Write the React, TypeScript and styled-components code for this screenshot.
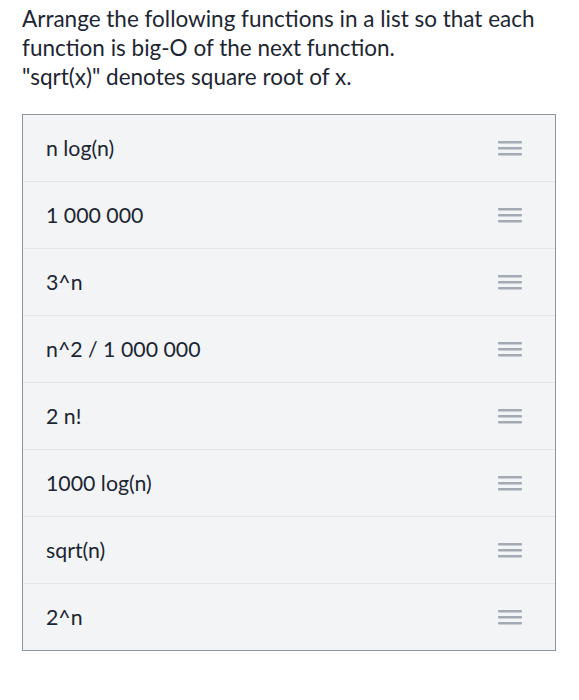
import React from 'react';
import styled, { createGlobalStyle } from 'styled-components';

const Global = createGlobalStyle`
  html, body {
    margin: 0;
    padding: 0;
    background: #ffffff;
  }
  body {
    font-family: Lato, "Noto Sans", "Liberation Sans", sans-serif;
    color: #1f2a36;
  }
`;

const Page = styled.div`
  padding: 4px 23px 0 22px;
  width: 534px;
`;

const Prompt = styled.div`
  font-size: 22.5px;
  line-height: 29px;
  color: #1c2632;
  margin-bottom: 23px;
`;

const List = styled.div`
  display: flex;
  flex-direction: column;
  border: 1px solid #8c949e;
  background: #f3f4f6;
`;

const Row = styled.div<{ last?: boolean }>`
  display: flex;
  align-items: center;
  justify-content: space-between;
  height: 66px;
  padding: 0 33px 0 23px;
  border-bottom: ${({ last }) => (last ? 'none' : '1px solid #e2e5e9')};
`;

const Label = styled.span`
  font-size: 21.3px;
  color: #1c2632;
`;

const Handle = styled.svg`
  width: 24px;
  height: 18px;
  flex-shrink: 0;
`;

const items = [
  'n log(n)',
  '1 000 000',
  '3^n',
  'n^2 / 1 000 000',
  '2 n!',
  '1000 log(n)',
  'sqrt(n)',
  '2^n',
];

const GripIcon = () => (
  <Handle viewBox="0 0 24 18">
    <rect x="0" y="2" width="24" height="2.4" rx="1" fill="#a3aab3" />
    <rect x="0" y="8" width="24" height="2.4" rx="1" fill="#a3aab3" />
    <rect x="0" y="14" width="24" height="2.4" rx="1" fill="#a3aab3" />
  </Handle>
);

export default function App() {
  return (
    <Page>
      <Global />
      <Prompt>
        Arrange the following functions in a list so that each function is big-O of the next function.
        <br />
        "sqrt(x)" denotes square root of x.
      </Prompt>
      <List>
        {items.map((it, idx) => (
          <Row key={idx} last={idx === items.length - 1}>
            <Label>{it}</Label>
            <GripIcon />
          </Row>
        ))}
      </List>
    </Page>
  );
}
